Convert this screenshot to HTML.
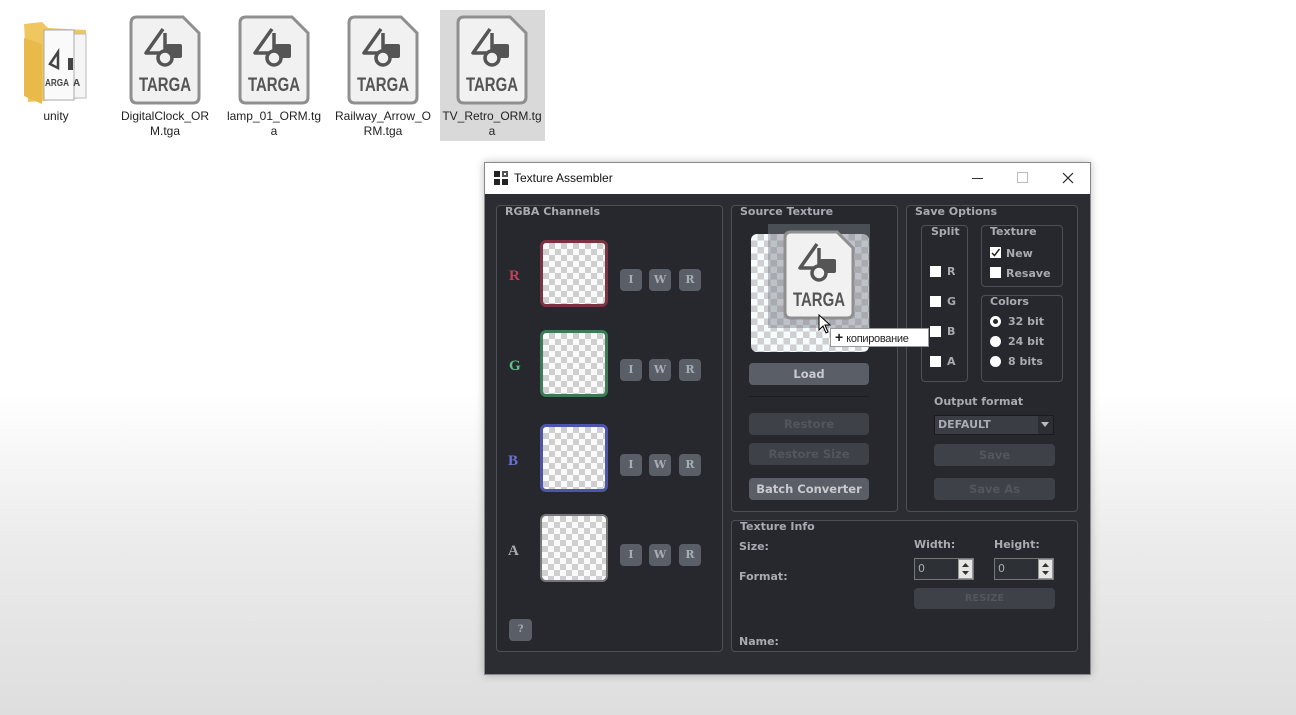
<!DOCTYPE html>
<html><head><meta charset="utf-8"><style>
*{margin:0;padding:0;box-sizing:border-box}
body{width:1296px;height:715px;overflow:hidden;position:relative;font-family:"Liberation Sans",sans-serif;background:linear-gradient(180deg,#fff 0%,#fff 55%,#ececec 75%,#dedede 100%)}
.a{position:absolute}
.lbl{font-size:12px;color:#222;text-align:center;width:100px;line-height:15px}
.win{left:484px;top:162px;width:607px;height:513px;background:#2b2d32;border:1px solid #888;box-shadow:0 0 8px rgba(0,0,0,.25)}
.tb{left:0;top:0;width:605px;height:31px;background:#fff}
.grp{border:1px solid #4c4f56;border-radius:4px;background:#26282d}
.gt{font-size:11px;font-weight:bold;color:#a8abb2;font-family:"DejaVu Sans",sans-serif}
.chk{background:repeating-conic-gradient(#cfcfcf 0 25%,#fafafa 0 50%) 0 0/12px 12px;border-radius:6px}
.btn{background:#5a5e67;border-radius:4px;color:#c8cad0;font-size:11.5px;font-weight:bold;text-align:center;font-family:"DejaVu Sans",sans-serif}
.dis{background:#3e4148;color:#53565d}
.sm{width:22px;height:22px;line-height:22px;font-size:11px;color:#a9acb3;font-family:"DejaVu Serif",serif}
.cb{width:11px;height:11px;background:#fff}
.t{font-size:11px;font-weight:bold;color:#a8abb2;font-family:"DejaVu Sans",sans-serif}
.rd{width:11px;height:11px;border-radius:50%;background:#fff}
</style></head><body>

<div class="a" style="left:440px;top:10px;width:105px;height:131px;background:#d9d9d9"></div>

<svg class="a" style="left:20px;top:18px" width="70" height="88" viewBox="0 0 70 88">
<path d="M4 6 L22 4 L28 10 L66 12 L66 80 L8 84 Z" fill="#f0c75e"/>
<rect x="44" y="16" width="22" height="64" fill="#f5f5f5" stroke="#bbb"/>
<rect x="24" y="12" width="30" height="70" fill="#fafafa" stroke="#aaa"/>
<path d="M4 20 L22 26 L22 86 L4 78 Z" fill="#e9b949"/>
<text x="25" y="68" font-size="10" font-weight="bold" fill="#444" textLength="24" lengthAdjust="spacingAndGlyphs">ARGA</text>
<text x="53" y="68" font-size="10" font-weight="bold" fill="#444">A</text>
<path d="M30 46 L38 34 L38 50 Z" fill="none" stroke="#444" stroke-width="2.5"/>
<rect x="48" y="40" width="5" height="12" fill="#444"/>
</svg>
<div class="a lbl" style="left:6px;top:109px">unity</div>

<svg width="0" height="0" style="position:absolute"><defs>
<g id="ti">
<path d="M8 2 H54 L70 18 V82 Q70 88 64 88 H8 Q2 88 2 82 V8 Q2 2 8 2 Z" fill="#f1f1f1" stroke="#8f8f8f" stroke-width="3"/>
<path d="M34 14 L17 38 H36 V18" fill="none" stroke="#555" stroke-width="3.5" stroke-linejoin="round"/>
<rect x="37" y="29" width="16" height="14" rx="2" fill="#555"/>
<circle cx="36" cy="43" r="7" fill="#f1f1f1" stroke="#555" stroke-width="3.5"/>
</g></defs></svg>
<svg class="a" style="left:129px;top:15px" width="72" height="90"><use href="#ti"/><text x="10" y="76" font-size="19" font-weight="bold" fill="#555" textLength="52" lengthAdjust="spacingAndGlyphs">TARGA</text></svg>
<svg class="a" style="left:238px;top:15px" width="72" height="90"><use href="#ti"/><text x="10" y="76" font-size="19" font-weight="bold" fill="#555" textLength="52" lengthAdjust="spacingAndGlyphs">TARGA</text></svg>
<svg class="a" style="left:347px;top:15px" width="72" height="90"><use href="#ti"/><text x="10" y="76" font-size="19" font-weight="bold" fill="#555" textLength="52" lengthAdjust="spacingAndGlyphs">TARGA</text></svg>
<svg class="a" style="left:456px;top:15px" width="72" height="90"><use href="#ti"/><text x="10" y="76" font-size="19" font-weight="bold" fill="#555" textLength="52" lengthAdjust="spacingAndGlyphs">TARGA</text></svg>
<div class="a lbl" style="left:115px;top:109px">DigitalClock_OR<br>M.tga</div>
<div class="a lbl" style="left:224px;top:109px">lamp_01_ORM.tg<br>a</div>
<div class="a lbl" style="left:333px;top:109px">Railway_Arrow_O<br>RM.tga</div>
<div class="a lbl" style="left:442px;top:109px">TV_Retro_ORM.tg<br>a</div>

<div class="a win">
 <div class="a tb">
  <svg class="a" style="left:8px;top:7px" width="16" height="16"><rect width="16" height="16" fill="#fff"/><rect x="1" y="1" width="6" height="6" fill="#222"/><rect x="9" y="9" width="6" height="6" fill="#222"/><rect x="9" y="1" width="6" height="6" fill="#555"/><rect x="1" y="9" width="6" height="6" fill="#222"/><rect x="11" y="3" width="2" height="2" fill="#fff"/></svg>
  <div class="a" style="left:29px;top:8px;font-size:12px;color:#111">Texture Assembler</div>
  <div class="a" style="left:487px;top:15px;width:11px;height:1px;background:#333"></div>
  <div class="a" style="left:532px;top:9px;width:11px;height:11px;border:1px solid #bbb"></div>
  <svg class="a" style="left:577px;top:9px" width="12" height="12"><path d="M1 1 L11 11 M11 1 L1 11" stroke="#222" stroke-width="1.2"/></svg>
 </div>
</div>

<div class="a grp" style="left:496px;top:205px;width:227px;height:447px"></div>
<div class="a gt" style="left:505px;top:205px">RGBA Channels</div>
<div class="a" style="left:509px;top:268px;font:bold 15px 'Liberation Serif',serif;color:#c2405a">R</div>
<div class="a" style="left:509px;top:358px;font:bold 15px 'Liberation Serif',serif;color:#5fc48a">G</div>
<div class="a" style="left:508px;top:453px;font:bold 15px 'Liberation Serif',serif;color:#6a72d8">B</div>
<div class="a" style="left:508px;top:543px;font:bold 15px 'Liberation Serif',serif;color:#a8abb2">A</div>
<div class="a chk" style="left:540px;top:240px;width:68px;height:67px;border:3px solid #7a3342"></div>
<div class="a chk" style="left:540px;top:330px;width:68px;height:67px;border:3px solid #3f7a56"></div>
<div class="a chk" style="left:540px;top:424px;width:68px;height:68px;border:3px solid #4c55a8"></div>
<div class="a chk" style="left:540px;top:514px;width:68px;height:68px;border:2px solid #777"></div>
<div class="a btn sm" style="left:620px;top:269px">I</div><div class="a btn sm" style="left:649px;top:269px">W</div><div class="a btn sm" style="left:679px;top:269px">R</div>
<div class="a btn sm" style="left:620px;top:359px">I</div><div class="a btn sm" style="left:649px;top:359px">W</div><div class="a btn sm" style="left:679px;top:359px">R</div>
<div class="a btn sm" style="left:620px;top:454px">I</div><div class="a btn sm" style="left:649px;top:454px">W</div><div class="a btn sm" style="left:679px;top:454px">R</div>
<div class="a btn sm" style="left:620px;top:544px">I</div><div class="a btn sm" style="left:649px;top:544px">W</div><div class="a btn sm" style="left:679px;top:544px">R</div>
<div class="a btn sm" style="left:509px;top:619px;width:23px;font-size:10px">?</div>

<div class="a grp" style="left:731px;top:205px;width:167px;height:307px"></div>
<div class="a gt" style="left:740px;top:205px">Source Texture</div>
<div class="a chk" style="left:751px;top:234px;width:118px;height:118px;background:repeating-conic-gradient(#cfcfcf 0 25%,#f6fbfd 0 50%) 0 0/13px 13px"></div>
<div class="a" style="left:768px;top:224px;width:102px;height:104px;background:rgba(120,125,135,.45)"></div>
<svg class="a" style="left:783px;top:230px" width="72" height="90"><use href="#ti"/><text x="10" y="76" font-size="19" font-weight="bold" fill="#555" textLength="52" lengthAdjust="spacingAndGlyphs">TARGA</text></svg>
<div class="a btn" style="left:749px;top:363px;width:120px;height:22px;line-height:22px">Load</div>
<div class="a" style="left:749px;top:396px;width:120px;height:1px;background:#1c1d21"></div>
<div class="a btn dis" style="left:749px;top:413px;width:120px;height:22px;line-height:22px">Restore</div>
<div class="a btn dis" style="left:749px;top:443px;width:120px;height:22px;line-height:22px">Restore Size</div>
<div class="a btn" style="left:749px;top:478px;width:120px;height:22px;line-height:22px">Batch Converter</div>

<div class="a grp" style="left:906px;top:205px;width:172px;height:307px"></div>
<div class="a gt" style="left:915px;top:205px">Save Options</div>
<div class="a grp" style="left:921px;top:225px;width:47px;height:157px"></div>
<div class="a t" style="left:931px;top:225px">Split</div>
<div class="a cb" style="left:930px;top:266px"></div><div class="a t" style="left:947px;top:265px">R</div>
<div class="a cb" style="left:930px;top:296px"></div><div class="a t" style="left:947px;top:295px">G</div>
<div class="a cb" style="left:930px;top:326px"></div><div class="a t" style="left:947px;top:325px">B</div>
<div class="a cb" style="left:930px;top:356px"></div><div class="a t" style="left:947px;top:355px">A</div>
<div class="a grp" style="left:981px;top:225px;width:82px;height:62px"></div>
<div class="a t" style="left:990px;top:225px">Texture</div>
<div class="a cb" style="left:990px;top:247px"></div><svg class="a" style="left:990px;top:247px" width="11" height="11"><path d="M2 6 L4.5 8.5 L9.5 2" stroke="#222" stroke-width="1.5" fill="none"/></svg><div class="a t" style="left:1006px;top:247px">New</div>
<div class="a cb" style="left:990px;top:267px"></div><div class="a t" style="left:1006px;top:267px">Resave</div>
<div class="a grp" style="left:981px;top:295px;width:82px;height:87px"></div>
<div class="a t" style="left:990px;top:295px">Colors</div>
<div class="a rd" style="left:990px;top:316px;border:3px solid #fff;background:#26282d"></div><div class="a t" style="left:1008px;top:315px">32 bit</div>
<div class="a rd" style="left:990px;top:336px"></div><div class="a t" style="left:1008px;top:335px">24 bit</div>
<div class="a rd" style="left:990px;top:356px"></div><div class="a t" style="left:1008px;top:355px">8 bits</div>
<div class="a t" style="left:934px;top:395px">Output format</div>
<div class="a" style="left:934px;top:415px;width:120px;height:20px;background:#3a3d44;border:1px solid #1a1b1e"></div>
<div class="a t" style="left:938px;top:418px;font-size:11px">DEFAULT</div>
<div class="a" style="left:1038px;top:416px;width:15px;height:18px;background:#2c2e33"></div>
<svg class="a" style="left:1041px;top:422px" width="9" height="6"><path d="M0 0 H8 L4 5 Z" fill="#bbb"/></svg>
<div class="a btn dis" style="left:934px;top:444px;width:121px;height:22px;line-height:22px">Save</div>
<div class="a btn dis" style="left:934px;top:478px;width:121px;height:22px;line-height:22px">Save As</div>

<div class="a grp" style="left:731px;top:520px;width:347px;height:132px"></div>
<div class="a gt" style="left:740px;top:520px">Texture Info</div>
<div class="a t" style="left:739px;top:540px">Size:</div>
<div class="a t" style="left:739px;top:570px">Format:</div>
<div class="a t" style="left:739px;top:635px">Name:</div>
<div class="a t" style="left:914px;top:538px">Width:</div>
<div class="a t" style="left:994px;top:538px">Height:</div>
<div class="a" style="left:914px;top:558px;width:60px;height:22px;background:#2d3035;border:1px solid #777"></div>
<div class="a t" style="left:918px;top:562px;font-weight:normal">0</div>
<div class="a" style="left:958px;top:559px;width:15px;height:20px;background:#e6e6e6;border:1px solid #999"></div>
<svg class="a" style="left:961px;top:562px" width="9" height="14"><path d="M1 5 H8 L4.5 1 Z M1 9 H8 L4.5 13 Z" fill="#333"/></svg>
<div class="a" style="left:994px;top:558px;width:60px;height:22px;background:#2d3035;border:1px solid #777"></div>
<div class="a t" style="left:998px;top:562px;font-weight:normal">0</div>
<div class="a" style="left:1038px;top:559px;width:15px;height:20px;background:#e6e6e6;border:1px solid #999"></div>
<svg class="a" style="left:1041px;top:562px" width="9" height="14"><path d="M1 5 H8 L4.5 1 Z M1 9 H8 L4.5 13 Z" fill="#333"/></svg>
<div class="a btn dis" style="left:914px;top:588px;width:141px;height:21px;line-height:21px;font-size:10px">RESIZE</div>

<svg class="a" style="left:818px;top:314px;z-index:10" width="14" height="20"><path d="M1 1 L1 16 L5 12 L8 19 L10 18 L7 11 L12 11 Z" fill="#fff" stroke="#000"/></svg>
<div class="a" style="left:830px;top:328px;width:99px;height:19px;background:#fff;border:1px solid #999;color:#222;padding-left:4px;line-height:17px;white-space:nowrap;overflow:hidden;font-size:11px;z-index:10"><b style="font-size:14px">+</b> <span style="display:inline-block;font-size:11px;letter-spacing:-0.3px">копирование</span></div>
</body></html>
